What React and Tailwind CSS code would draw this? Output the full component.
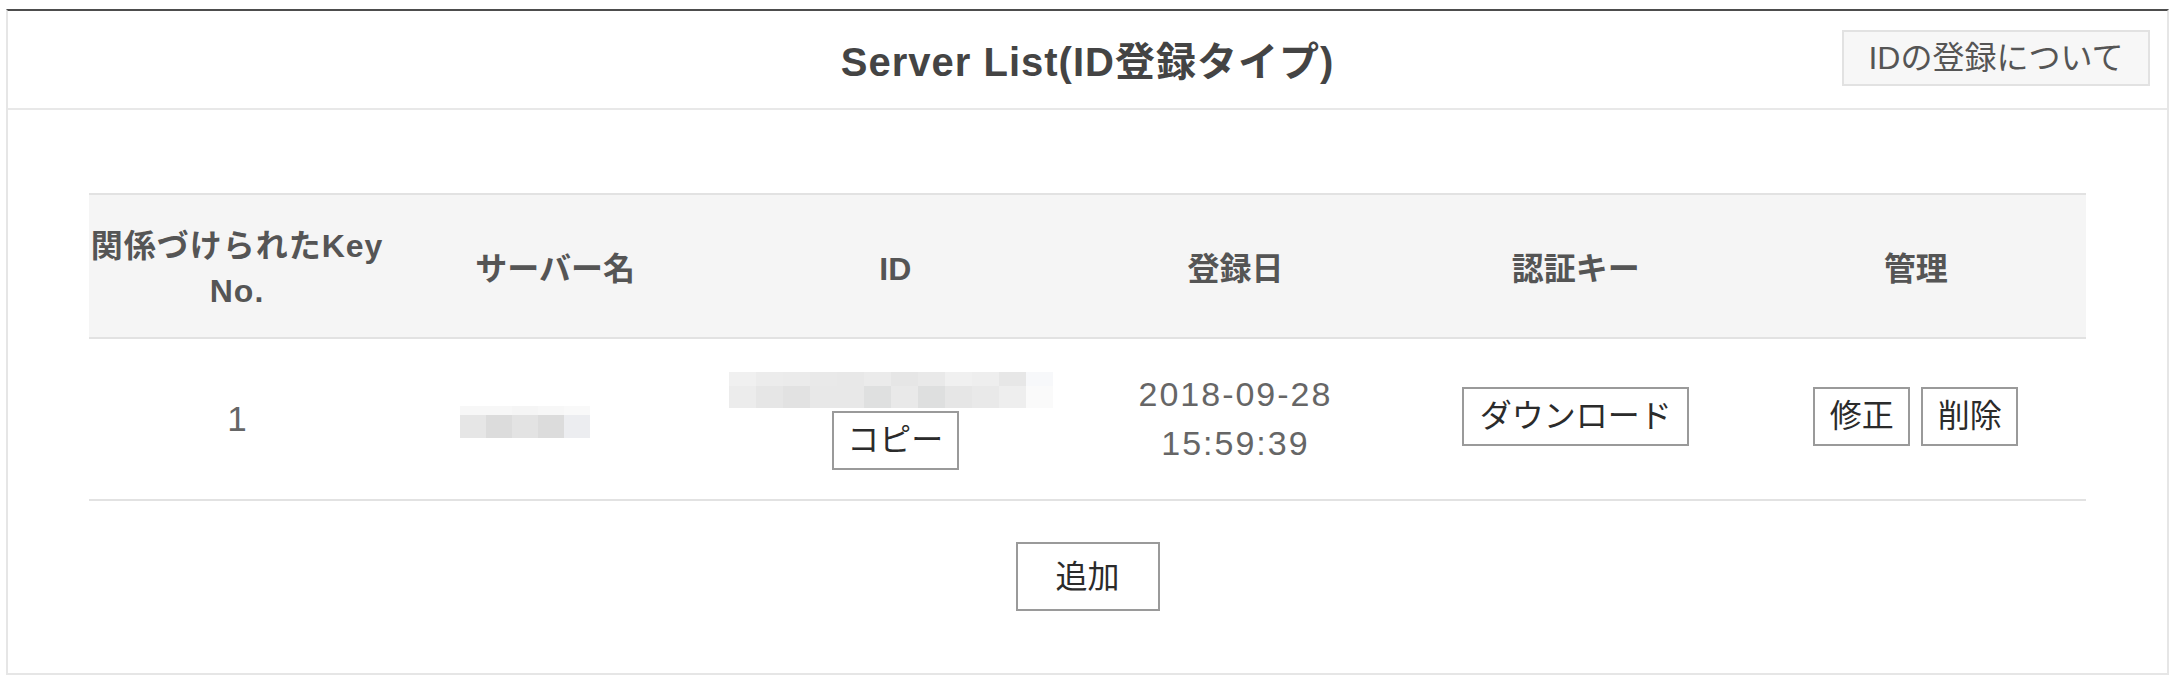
const idTop = [
  'bg-[#f0f0f0]', 'bg-[#ececec]', 'bg-[#ebebeb]', 'bg-[#e9e9e9]', 'bg-[#e8e8e8]', 'bg-[#ebebeb]',
  'bg-[#e6e6e6]', 'bg-[#e9e9e9]', 'bg-[#f0f0f0]', 'bg-[#eeeeee]', 'bg-[#e7e7e7]', 'bg-[#f7f8fa]',
];
const idBottom = [
  'bg-[#ececec]', 'bg-[#e6e6e6]', 'bg-[#e2e2e2]', 'bg-[#e8e8e8]', 'bg-[#e8e8e8]', 'bg-[#dfe0e0]',
  'bg-[#e9e9e9]', 'bg-[#dedfdf]', 'bg-[#e6e6e6]', 'bg-[#e9e9e9]', 'bg-[#eeeeee]', 'bg-[#fafafa]',
];
const nameTop = ['bg-[#f7f7f7]', 'bg-[#f7f7f7]', 'bg-[#f5f5f5]', 'bg-[#f7f7f7]', 'bg-[#f9f9f9]'];
const nameBottom = ['bg-[#e6e6e6]', 'bg-[#dcdcdc]', 'bg-[#e3e3e3]', 'bg-[#dcdcdc]', 'bg-[#ecedf0]'];

function Btn({ children, className = '' }) {
  return (
    <button
      className={`border-2 border-[#9a9a9a] bg-white text-[#2b2b2b] text-[32px] leading-none ${className}`}
    >
      {children}
    </button>
  );
}

// pixelated placeholder for masked values
function Blur({ top, bottom, topH, bottomH, cellW }) {
  return (
    <div className="inline-flex flex-col">
      <div className={`flex ${topH}`}>
        {top.map((c, i) => (
          <div key={i} className={`${cellW} ${c}`} />
        ))}
      </div>
      <div className={`flex ${bottomH}`}>
        {bottom.map((c, i) => (
          <div key={i} className={`${cellW} ${c}`} />
        ))}
      </div>
    </div>
  );
}

export default function App() {
  const th = 'font-bold text-[32px] leading-[45px] text-[#555] text-center align-middle pt-[6px]';
  const td = 'text-center align-middle text-[#666]';

  return (
    <div className="min-h-[685px] w-[2179px] bg-white pt-[9px] pl-[6px] font-['Liberation_Sans','Noto_Sans_CJK_JP',sans-serif]">
      <div className="w-[2163px] border-2 border-[#e6e6e6] border-t-[#4d4d4d]">
        <div className="h-[99px] border-b-2 border-[#e8e8e8] grid grid-cols-[1fr_auto_1fr] items-center">
          <div />
          <h2 className="text-[40px] font-bold text-[#444] tracking-[1px] leading-none pt-[4px]">
            Server List(ID登録タイプ)
          </h2>
          <div className="flex justify-end pr-[17px] -mt-[4px]">
            <button className="w-[308px] h-[56px] border-2 border-[#e2e2e2] bg-[#f7f7f7] text-[#555] text-[32px] leading-none">
              IDの登録について
            </button>
          </div>
        </div>

        <div className="px-[81px] pt-[83px] pb-[62px]">
          <table className="w-[1997px] table-fixed border-collapse">
            <colgroup>
              <col className="w-[296px]" />
              <col />
              <col />
              <col />
              <col />
              <col />
            </colgroup>
            <thead>
              <tr className="h-[144px] bg-[#f5f5f5] border-y-2 border-[#e2e2e2]">
                <th className={`${th} whitespace-nowrap tracking-[1px]`}>
                  関係づけられたKey
                  <br />
                  No.
                </th>
                <th className={th}>サーバー名</th>
                <th className={th}>ID</th>
                <th className={th}>登録日</th>
                <th className={th}>認証キー</th>
                <th className={th}>管理</th>
              </tr>
            </thead>
            <tbody>
              <tr className="h-[162px] border-b-2 border-[#e2e2e2]">
                <td className={`${td} text-[35px]`}>1</td>
                <td className={td}>
                  <div className="flex justify-center pt-[6px] pr-[60px]">
                    <Blur top={nameTop} bottom={nameBottom} topH="h-[9px]" bottomH="h-[23px]" cellW="w-[26px]" />
                  </div>
                </td>
                <td className={td}>
                  <div className="flex flex-col items-center gap-[3px]">
                    <div className="mr-[8px]">
                      <Blur top={idTop} bottom={idBottom} topH="h-[14px]" bottomH="h-[22px]" cellW="w-[27px]" />
                    </div>
                    <Btn className="w-[127px] h-[59px]">コピー</Btn>
                  </div>
                </td>
                <td className={`${td} text-[34px] leading-[49px] tracking-[2px]`}>
                  2018-09-28
                  <br />
                  15:59:39
                </td>
                <td className={td}>
                  <div className="flex justify-center -mt-[6px]">
                    <Btn className="w-[227px] h-[59px]">ダウンロード</Btn>
                  </div>
                </td>
                <td className={td}>
                  <div className="flex justify-center gap-[11px] -mt-[6px]">
                    <Btn className="w-[97px] h-[59px]">修正</Btn>
                    <Btn className="w-[97px] h-[59px]">削除</Btn>
                  </div>
                </td>
              </tr>
            </tbody>
          </table>

          <div className="flex justify-center mt-[41px]">
            <Btn className="w-[144px] h-[69px]">追加</Btn>
          </div>
        </div>
      </div>
    </div>
  );
}
